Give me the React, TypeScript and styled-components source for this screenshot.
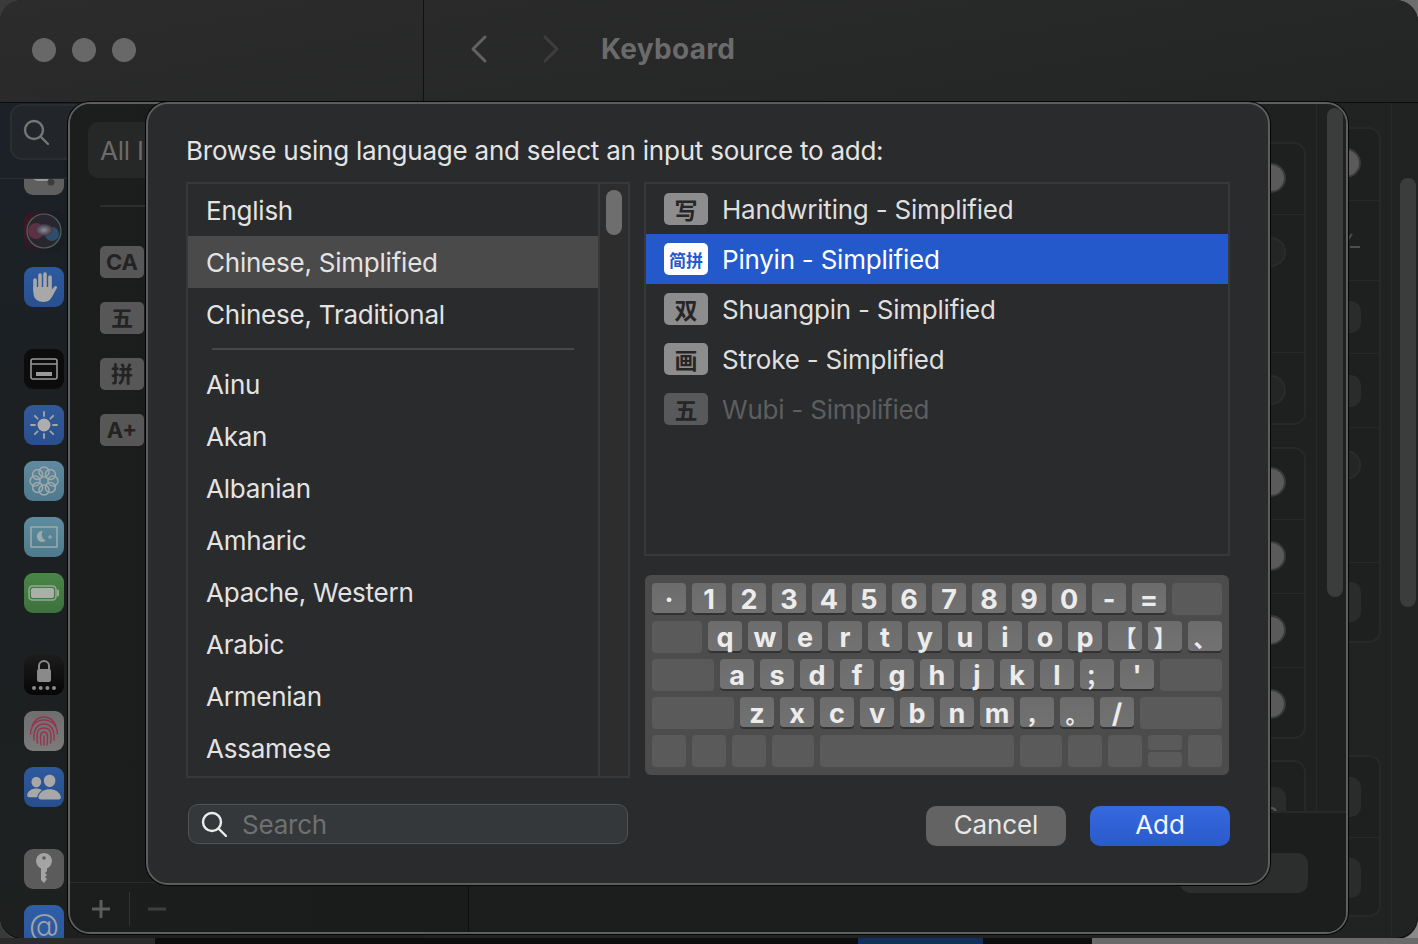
import React from "react";
import styled, { createGlobalStyle } from "styled-components";
import { IoPeople } from "react-icons/io5";

const FONT = `Inter, "Noto Sans CJK SC", "Liberation Sans", sans-serif`;
const TRACK = "-0.23px";

const Global = createGlobalStyle`
  * { box-sizing: border-box; }
  html, body { margin: 0; padding: 0; background: #3a3a3a; overflow: hidden; }
  body { font-family: ${FONT}; -webkit-font-smoothing: antialiased; }
`;

const Desktop = styled.div`
  position: relative;
  width: 1418px;
  height: 944px;
  overflow: hidden;
  background: linear-gradient(100deg, #3a3a3a 0%, #3a3a3a 70%, #8a8a8a 100%);
`;

const MainWindow = styled.div`
  height: 938px;
  border-radius: 22px;
  overflow: hidden;
  display: flex;
  flex-direction: column;
  background: #212222;
  box-shadow: 0 1px 0 #000, 0 2px 0 #4a4a4a;
`;

const BottomStrip = styled.div`
  height: 6px;
  display: flex;
  background: #0f0f0f;
`;

const StripPart = styled.div<{ $w: number; $c: string }>`
  width: ${(p) => p.$w}px;
  background: ${(p) => p.$c};
  flex: ${(p) => (p.$w ? "none" : 1)};
`;

const TitleBar = styled.header`
  height: 103px;
  flex: none;
  display: flex;
  border-bottom: 1px solid #0b0b0b;
  background: linear-gradient(170deg, #2c2c2c, #232424);
`;

const TitleLeft = styled.div`
  width: 424px;
  flex: none;
  display: flex;
  align-items: center;
  gap: 16px;
  padding: 0 0 2px 32px;
  border-right: 1px solid #111;
`;

const TrafficDot = styled.span`
  width: 24px;
  height: 24px;
  border-radius: 50%;
  background: #686868;
`;

const TitleRight = styled.div`
  flex: 1;
  display: flex;
  align-items: center;
  padding: 0 0 4px 43px;
`;

const NavIcon = styled.svg`
  width: 24px;
  height: 32px;
  margin-right: 48px;
  fill: none;
  stroke-width: 3;
  stroke-linecap: round;
  stroke-linejoin: round;
`;

const WindowTitle = styled.h1`
  margin: 0 0 0 -10px;
  font-size: 28px;
  line-height: 34px;
  font-weight: 700;
  letter-spacing: 0.3px;
  color: #6b6b6b;
`;

const MainBody = styled.div`
  flex: 1;
  min-height: 0;
  display: flex;
`;

const Sidebar = styled.aside`
  width: 424px;
  flex: none;
  display: flex;
  flex-direction: column;
  background: linear-gradient(180deg, #1b2127 0%, #1c2023 35%, #1e2020 100%);
`;

const SidebarSearch = styled.div`
  margin: 1px 0 0 10px;
  height: 56px;
  border: 2px solid #2b2e31;
  border-radius: 12px;
  display: flex;
  align-items: center;
  padding-left: 11px;
  background: #22262a;
  flex: none;
`;

const SidebarScroll = styled.div`
  margin-top: 18px;
  flex: 1;
  min-height: 0;
  overflow: hidden;
  border-top: 1px solid #2b2d2e;
  padding: 0 0 0 24px;
`;

const IconStack = styled.div`
  margin-top: -24px;
  display: flex;
  flex-direction: column;
  gap: 42px;
`;

const IconGroup = styled.div`
  display: flex;
  flex-direction: column;
  gap: 16px;
`;

const AppIcon = styled.div<{ $bg: string }>`
  position: relative;
  width: 40px;
  height: 40px;
  border-radius: 9px;
  background: ${(p) => p.$bg};
  display: flex;
  align-items: center;
  justify-content: center;
  overflow: hidden;
  color: #a9a9a9;
`;

const AtGlyph = styled.span`
  font-size: 31px;
  line-height: 36px;
  color: #a0a4aa;
  font-weight: 300;
`;

const MainContent = styled.div`
  flex: 1;
  position: relative;
  display: flex;
  min-width: 0;
`;

const ScrollColumn = styled.div<{ $pad: number }>`
  flex: 1;
  min-width: 0;
  padding-right: ${(p) => p.$pad}px;
  border-right: 1px solid #272828;
  display: flex;
  flex-direction: column;
  align-items: flex-end;
  overflow: hidden;
`;

const Gutter = styled.div<{ $w: number }>`
  width: ${(p) => p.$w}px;
  flex: none;
`;

const ScrollBar = styled.div<{ $top: number; $h: number; $right: number }>`
  position: absolute;
  top: ${(p) => p.$top}px;
  right: ${(p) => p.$right}px;
  width: 16px;
  height: ${(p) => p.$h}px;
  border-radius: 8px;
  background: #3b3d3c;
`;

const Card = styled.section<{ $top: number; $h: number; $w: number }>`
  flex: none;
  width: ${(p) => p.$w}px;
  height: ${(p) => p.$h}px;
  margin-top: ${(p) => p.$top}px;
  border: 2px solid #272828;
  border-radius: 12px;
  display: flex;
  flex-direction: column;
  background: #1e1f1f;
`;

const CardRow = styled.div<{ $h: number; $pad?: number }>`
  flex: none;
  height: ${(p) => p.$h}px;
  display: flex;
  justify-content: flex-end;
  align-items: ${(p) => (p.$pad !== undefined ? "flex-start" : "center")};
  padding: ${(p) => p.$pad ?? 0}px 18px 0 0;
  & + & {
    border-top: 1px solid #272828;
  }
`;

const Knob = styled.span<{ $on?: boolean }>`
  width: 30px;
  height: 30px;
  border-radius: 50%;
  background: ${(p) => (p.$on ? "#5a5a5a" : "#242625")};
  border: 2px solid ${(p) => (p.$on ? "#3a3a3a" : "#2a2c2b")};
`;

const GhostButton = styled.span<{ $w: number; $h: number }>`
  width: ${(p) => p.$w}px;
  height: ${(p) => p.$h}px;
  border-radius: 10px;
  background: #2a2b2b;
  display: flex;
  align-items: center;
  justify-content: flex-end;
  padding-right: 8px;
  color: #555;
  font-size: 26px;
`;

const Sheet = styled.div`
  position: absolute;
  left: 68px;
  top: 102px;
  width: 1280px;
  height: 832px;
  border: 2px solid #5e5f5f;
  border-radius: 22px;
  box-shadow: 0 0 0 1px #050505;
  overflow: hidden;
  display: flex;
  background: #1c1d1d;
`;

const SheetLeft = styled.div`
  width: 399px;
  flex: none;
  display: flex;
  flex-direction: column;
  border-right: 1px solid #0e0e0e;
  background: linear-gradient(90deg, #1c1d1d, #1a1b1b);
`;

const SheetLeftBody = styled.div`
  flex: 1;
  padding: 18px 0 0 18px;
`;

const AllField = styled.div`
  height: 56px;
  border-radius: 10px;
  background: #262727;
  color: #6b6b6b;
  font-size: 26px;
  letter-spacing: ${TRACK};
  line-height: 58px;
  padding-left: 12px;
  white-space: nowrap;
  overflow: hidden;
`;

const PaneRule = styled.hr`
  margin: 27px 0 39px 12px;
  border: 0;
  border-top: 2px solid #2d2e2e;
`;

const SourceList = styled.div`
  display: flex;
  flex-direction: column;
  gap: 24px;
  padding-left: 12px;
`;

const SourceBadge = styled.span`
  width: 44px;
  height: 32px;
  border-radius: 5px;
  background: #575757;
  color: #232323;
  font-size: 22px;
  font-weight: 700;
  line-height: 32px;
  text-align: center;
`;

const PaneFooter = styled.div`
  height: 50px;
  flex: none;
  border-top: 1px solid #2a2b2b;
  display: flex;
  align-items: center;
  padding: 2px 0 0 20px;
`;

const FooterGlyph = styled.svg`
  width: 22px;
  height: 22px;
  stroke-width: 3;
  fill: none;
`;

const FooterSep = styled.span`
  width: 1px;
  height: 34px;
  background: #333;
  margin: 0 16px 0 17px;
`;

const SheetRight = styled.div`
  flex: 1;
  min-width: 0;
  display: flex;
  flex-direction: column;
  position: relative;
  background: #1f2020;
`;

const SheetRightBody = styled.div`
  height: 709px;
  flex: none;
  display: flex;
  border-bottom: 2px solid #272828;
`;

const SheetRightFooter = styled.div`
  flex: 1;
  display: flex;
  justify-content: flex-end;
  padding: 40px 38px 0 0;
  background: #1c1d1d;
`;

const DoneButton = styled.div`
  width: 128px;
  height: 40px;
  border-radius: 10px;
  background: #2c2d2d;
`;

const Dialog = styled.div`
  position: absolute;
  left: 146px;
  top: 102px;
  width: 1124px;
  height: 783px;
  border: 2px solid #5c5d5d;
  border-radius: 22px;
  box-shadow: 0 0 0 1px #040404;
  background: #2a2b2d;
  padding: 30px 38px 0;
  display: flex;
  flex-direction: column;
  color: #e3e3e3;
`;

const DialogTitle = styled.h2`
  margin: 0 0 14px 0;
  height: 34px;
  font-size: 26px;
  letter-spacing: ${TRACK};
  line-height: 34px;
  font-weight: 400;
  color: #e4e4e4;
  white-space: nowrap;
`;

const Columns = styled.div`
  display: flex;
  gap: 14px;
  height: 596px;
  flex: none;
`;

const LanguageBox = styled.div`
  width: 444px;
  flex: none;
  border: 2px solid #37383a;
  display: flex;
`;

const LanguageList = styled.ul`
  flex: 1;
  margin: 0;
  padding: 0;
  list-style: none;
  overflow: hidden;
`;

const LanguageRow = styled.li<{ $selected?: boolean; $pinned?: boolean }>`
  height: 52px;
  line-height: ${(p) => (p.$pinned ? 54 : 52)}px;
  padding-left: 18px;
  font-size: 26px;
  letter-spacing: ${TRACK};
  color: #e3e3e3;
  background: ${(p) => (p.$selected ? "#4a4a4a" : "transparent")};
`;

const LanguageRule = styled.li`
  height: 19px;
  padding: 8px 24px 0;
  &::after {
    content: "";
    display: block;
    height: 2px;
    background: #47484a;
  }
`;

const ScrollTrack = styled.div`
  width: 30px;
  flex: none;
  border-left: 2px solid #37383a;
  background: #2d2d2e;
  padding: 6px 5px 0 6px;
`;

const ScrollThumb = styled.div`
  width: 16px;
  height: 45px;
  border-radius: 8px;
  background: #6e6e6e;
`;

const RightColumn = styled.div`
  flex: 1;
  min-width: 0;
  display: flex;
  flex-direction: column;
`;

const SourceBox = styled.ul`
  height: 374px;
  flex: none;
  margin: 0;
  padding: 0;
  list-style: none;
  border: 2px solid #37383a;
`;

const SourceRow = styled.li<{ $selected?: boolean; $disabled?: boolean }>`
  height: 50px;
  display: flex;
  align-items: center;
  gap: 14px;
  padding-left: 18px;
  font-size: 26px;
  letter-spacing: ${TRACK};
  color: ${(p) => (p.$selected ? "#ffffff" : p.$disabled ? "#5d5e5f" : "#dfdfdf")};
  background: ${(p) => (p.$selected ? "#2359cb" : "transparent")};
`;

const GlyphBadge = styled.span<{ $selected?: boolean; $disabled?: boolean }>`
  width: 44px;
  height: 32px;
  flex: none;
  border-radius: 5px;
  display: flex;
  align-items: center;
  justify-content: center;
  background: ${(p) => (p.$selected ? "#ffffff" : p.$disabled ? "#58595a" : "#8d8d8d")};
  color: ${(p) => (p.$selected ? "#2359cb" : "#262626")};
  font-size: ${(p) => (p.$selected ? 17 : 23)}px;
  letter-spacing: 0;
  font-weight: 700;
  font-family: "Noto Sans CJK SC", sans-serif;
  line-height: 1;
  white-space: nowrap;
`;

const Keyboard = styled.div`
  margin: 19px 1px 0;
  height: 200px;
  flex: none;
  background: #4c4c4c;
  border-radius: 6px;
  padding: 8px 7px;
  display: flex;
  flex-direction: column;
  gap: 6px;
`;

const KeyRow = styled.div`
  height: 32px;
  display: flex;
  gap: 6px;
`;

const Key = styled.span<{ $w: number }>`
  width: ${(p) => p.$w}px;
  height: 30px;
  flex: none;
  border-radius: 4px;
  background: linear-gradient(180deg, #6c6c6c, #727272);
  box-shadow: 0 2px 0 #323232;
  color: #ececec;
  font-size: 27px;
  font-weight: 700;
  line-height: 33px;
  text-align: center;
`;

const CjkKeyLabel = styled.span`
  font-family: "Noto Sans CJK SC", sans-serif;
  font-size: 23px;
  line-height: 30px;
`;

const BlankKey = styled.span<{ $w: number }>`
  width: ${(p) => p.$w}px;
  height: 32px;
  flex: none;
  border-radius: 4px;
  background: #5a5a5a;
`;

const ArrowKey = styled.span`
  width: 34px;
  height: 32px;
  flex: none;
  display: flex;
  flex-direction: column;
  gap: 2px;
`;

const ArrowHalf = styled.span`
  flex: 1;
  background: #5a5a5a;
  border-radius: 3px;
`;

const Footer = styled.div`
  margin-top: 26px;
  display: flex;
  align-items: flex-start;
`;

const SearchField = styled.div`
  width: 440px;
  height: 40px;
  margin-left: 2px;
  border: 1px solid #515355;
  border-radius: 10px;
  background: #34383a;
  display: flex;
  align-items: center;
  gap: 15px;
  padding-left: 12px;
  color: #6e7071;
  font-size: 26px;
  letter-spacing: ${TRACK};
`;

const ActionButton = styled.button<{ $primary?: boolean }>`
  width: 140px;
  height: 40px;
  margin: 2px 0 0 ${(p) => (p.$primary ? 24 : 0)}px;
  border: 0;
  border-radius: 10px;
  font-family: inherit;
  font-size: 26px;
  letter-spacing: -0.1px;
  color: ${(p) => (p.$primary ? "#f4f6fd" : "#e8e8e8")};
  background: ${(p) =>
    p.$primary ? "linear-gradient(180deg, #3569df, #2b5acb)" : "#636363"};
  padding: 0 0 4px;
`;

const Spacer = styled.div`
  flex: 1;
`;

const MagnifierSvg = styled.svg<{ $c: string }>`
  width: 26px;
  height: 26px;
  flex: none;
  fill: none;
  stroke: ${(p) => p.$c};
  stroke-width: 2.4;
  stroke-linecap: round;
`;

const Magnifier = ({ c }: { c: string }) => (
  <MagnifierSvg $c={c} viewBox="0 0 26 26">
    <circle cx="11" cy="11" r="9" />
    <path d="M18 18l7 7" />
  </MagnifierSvg>
);

const LANGS_TOP = ["English", "Chinese, Simplified", "Chinese, Traditional"];
const LANGS_REST = ["Ainu", "Akan", "Albanian", "Amharic", "Apache, Western", "Arabic", "Armenian", "Assamese"];

const SOURCES = [
  { g: "写", t: "Handwriting - Simplified" },
  { g: "简拼", t: "Pinyin - Simplified", selected: true },
  { g: "双", t: "Shuangpin - Simplified" },
  { g: "画", t: "Stroke - Simplified" },
  { g: "五", t: "Wubi - Simplified", disabled: true },
];

type K = { l?: string; w: number; cjk?: boolean; arrow?: boolean };
const letters = (s: string): K[] => s.split("").map((l) => ({ l, w: 34 }));
const cjk = (l: string): K => ({ l, w: 34, cjk: true });

const KEYS: K[][] = [
  [...letters("·1234567890-="), { w: 50 }],
  [{ w: 50 }, ...letters("qwertyuiop"), cjk("【"), cjk("】"), cjk("、")],
  [{ w: 62 }, ...letters("asdfghjkl"), cjk("；"), { l: "'", w: 34 }, { w: 62 }],
  [{ w: 82 }, ...letters("zxcvbnm"), cjk("，"), cjk("。"), { l: "/", w: 34 }, { w: 82 }],
  [{ w: 34 }, { w: 34 }, { w: 34 }, { w: 42 }, { w: 194 }, { w: 42 }, { w: 34 }, { w: 34 }, { w: 34, arrow: true }, { w: 34 }],
];

const SIDEBAR_GROUPS = [
  [
    <AppIcon key="a" $bg="#5f5f5f">
      <svg width="40" height="40" viewBox="0 0 40 40">
        <rect x="8" y="14" width="24" height="12" rx="6" fill="#9a9a9a" />
        <circle cx="27" cy="27" r="3.5" fill="#3c3c3c" />
      </svg>
    </AppIcon>,
    <AppIcon key="b" $bg="#1f1a20">
      <svg width="40" height="40" viewBox="0 0 40 40">
        <defs>
          <radialGradient id="siriTile" cx="20%" cy="45%" r="70%">
            <stop offset="0" stopColor="#4a1428" />
            <stop offset="1" stopColor="#1b1d24" />
          </radialGradient>
          <radialGradient id="siriCore" cx="50%" cy="50%" r="50%">
            <stop offset="0" stopColor="#8e8e98" />
            <stop offset="1" stopColor="#3d3340" />
          </radialGradient>
        </defs>
        <rect width="40" height="40" fill="url(#siriTile)" />
        <circle cx="20" cy="20" r="17" fill="#2a2630" />
        <circle cx="12" cy="20" r="8" fill="#5e3044" />
        <circle cx="28" cy="23" r="7" fill="#2f4d6d" />
        <ellipse cx="20" cy="19" rx="9" ry="6" fill="url(#siriCore)" />
        <circle cx="20" cy="20" r="17" fill="none" stroke="#4a6a5a" strokeWidth="1.2" />
      </svg>
    </AppIcon>,
    <AppIcon key="c" $bg="linear-gradient(180deg,#2d5a9f,#29508f)">
      <svg width="30" height="32" viewBox="0 0 30 32" fill="#a8a8a8" stroke="#a8a8a8" strokeLinecap="round">
        <path d="M6 9v11M11 4v14M16 3v15M21 6v12" strokeWidth="3.6" fill="none" />
        <path d="M4.5 16h18v3l3-3.5c1.3-1.3 3.3 0 2.4 1.6l-4.4 8C21.600 29 19 31 15 31c-6 0-10.500-3-10.500-9z" stroke="none" />
      </svg>
    </AppIcon>,
  ],
  [
    <AppIcon key="a" $bg="#0c0c0c">
      <svg width="28" height="22" viewBox="0 0 28 22" fill="none" stroke="#999" strokeWidth="1.6">
        <rect x="1" y="1" width="26" height="20" rx="2" />
        <path d="M1 6h26" />
        <rect x="6" y="14" width="16" height="4" fill="#999" stroke="none" />
      </svg>
    </AppIcon>,
    <AppIcon key="b" $bg="linear-gradient(180deg,#31599a,#2a4f8c)">
      <svg width="30" height="30" viewBox="0 0 30 30" stroke="#a6a6a6" strokeWidth="1.8" strokeLinecap="round">
        <circle cx="15" cy="15" r="6.500" fill="#aeaeae" stroke="none" />
        <path d="M15 2v4M15 24v4M2 15h4M24 15h4M5.800 5.800l2.800 2.800M21.400 21.400l2.800 2.800M5.800 24.200l2.800-2.800M21.400 8.600l2.800-2.800" />
      </svg>
    </AppIcon>,
    <AppIcon key="c" $bg="linear-gradient(180deg,#5f8a9f,#4f7a8d)">
      <svg width="32" height="32" viewBox="0 0 32 32" fill="none" stroke="#a2a9ac" strokeWidth="1.5">
        <circle cx="16" cy="7" r="5" />
        <circle cx="16" cy="25" r="5" />
        <circle cx="7" cy="16" r="5" />
        <circle cx="25" cy="16" r="5" />
        <circle cx="9.600" cy="9.600" r="5" />
        <circle cx="22.400" cy="9.600" r="5" />
        <circle cx="9.600" cy="22.400" r="5" />
        <circle cx="22.400" cy="22.400" r="5" />
      </svg>
    </AppIcon>,
    <AppIcon key="d" $bg="linear-gradient(180deg,#5f8b9e,#4d7b8c)">
      <svg width="28" height="22" viewBox="0 0 28 22" fill="none">
        <rect x="1" y="1" width="26" height="20" stroke="#9eaaae" strokeWidth="1.5" />
        <path d="M13 5a5.500 5.500 0 1 0 3 9.500A6 6 0 0 1 13 5z" fill="#9eaaae" />
        <path d="M20 9v4M18 11h4" stroke="#9eaaae" strokeWidth="1.2" />
      </svg>
    </AppIcon>,
    <AppIcon key="e" $bg="linear-gradient(180deg,#4a8447,#3d713d)">
      <svg width="32" height="16" viewBox="0 0 32 16" fill="none">
        <rect x="1" y="1" width="27" height="14" rx="3.500" stroke="#97a897" strokeWidth="1.500" />
        <rect x="3" y="3" width="23" height="10" rx="2" fill="#a9afa9" />
        <path d="M30 5.500v5" stroke="#97a897" strokeWidth="2" strokeLinecap="round" />
      </svg>
    </AppIcon>,
  ],
  [
    <AppIcon key="a" $bg="linear-gradient(180deg,#1c1c1c,#060606)">
      <svg width="26" height="32" viewBox="0 0 26 32" fill="#8a8a8a">
        <path d="M8 11V7a5 5 0 0 1 10 0v4" fill="none" stroke="#8a8a8a" strokeWidth="2" />
        <rect x="6" y="10" width="14" height="13" rx="2" />
        <circle cx="3" cy="29" r="2" />
        <circle cx="9.700" cy="29" r="2" />
        <circle cx="16.400" cy="29" r="2" />
        <circle cx="23" cy="29" r="2" />
      </svg>
    </AppIcon>,
    <AppIcon key="b" $bg="linear-gradient(180deg,#6f6f6f,#7b7b7b)">
      <svg width="30" height="32" viewBox="0 0 30 32" fill="none" stroke="#96344f" strokeWidth="1.4" strokeLinecap="round">
        <path d="M3 11C6 4 11 2 15 2s9 2 12 9" />
        <path d="M1.500 19c.5-9 6-14 13.500-14s13 5 13.500 14" />
        <path d="M5 25c-1-10 3-16 10-16s11 6 10 16" />
        <path d="M8.500 28c-1.500-10 0-15 6.500-15s8 5 6.500 15" />
        <path d="M12 30c-1-9-1-13 3-13s4 4 3 13" />
        <path d="M15 21v9" />
      </svg>
    </AppIcon>,
    <AppIcon key="c" $bg="linear-gradient(180deg,#2d5a9e,#284e8c)">
      <IoPeople size={36} color="#a8a8a8" />
    </AppIcon>,
  ],
  [
    <AppIcon key="a" $bg="#5b5b5b">
      <svg width="20" height="32" viewBox="0 0 20 32" fill="#a4a4a4">
        <path d="M10 0a8 8 0 0 1 3 15.400V18l-2 2 2 2-2 2 2 2-3 4-3-3V15.400A8 8 0 0 1 10 0z" />
        <circle cx="10" cy="5" r="1.800" fill="#5b5b5b" />
      </svg>
    </AppIcon>,
    <AppIcon key="b" $bg="linear-gradient(180deg,#2f5fa8,#2c5597)">
      <AtGlyph>@</AtGlyph>
    </AppIcon>,
  ],
];

type RowSpec = { h: number; c?: "on" | "off" | "btn" | "btnLg" | "mark" | "cue"; pad?: number };

const Control = ({ c }: { c?: RowSpec["c"] }) => {
  if (c === "on") return <Knob $on />;
  if (c === "off") return <Knob />;
  if (c === "btn") return <GhostButton $w={62} $h={32} />;
  if (c === "btnLg") return <GhostButton $w={64} $h={40} />;
  if (c === "cue") return <GhostButton $w={64} $h={50}>c</GhostButton>;
  if (c === "mark")
    return (
      <svg width="14" height="16" viewBox="0 0 14 16" fill="none" stroke="#4c4d4d" strokeWidth="2">
        <path d="M0 8L5 1M3 14h10" />
      </svg>
    );
  return null;
};

const Rows = ({ rows }: { rows: RowSpec[] }) => (
  <>
    {rows.map((r, i) => (
      <CardRow key={i} $h={r.h} $pad={r.pad}>
        <Control c={r.c} />
      </CardRow>
    ))}
  </>
);

export default function App() {
  return (
    <Desktop>
      <Global />
      <MainWindow>
        <TitleBar>
          <TitleLeft>
            <TrafficDot />
            <TrafficDot />
            <TrafficDot />
          </TitleLeft>
          <TitleRight>
            <NavIcon viewBox="0 0 24 32" stroke="#626262">
              <path d="M18 4L6 16l12 12" />
            </NavIcon>
            <NavIcon viewBox="0 0 24 32" stroke="#3d3d3d">
              <path d="M6 4l12 12L6 28" />
            </NavIcon>
            <WindowTitle>Keyboard</WindowTitle>
          </TitleRight>
        </TitleBar>
        <MainBody>
          <Sidebar>
            <SidebarSearch>
              <Magnifier c="#767676" />
            </SidebarSearch>
            <SidebarScroll>
              <IconStack>
                {SIDEBAR_GROUPS.map((g, i) => (
                  <IconGroup key={i}>{g}</IconGroup>
                ))}
              </IconStack>
            </SidebarScroll>
          </Sidebar>
          <MainContent>
            <ScrollColumn $pad={10}>
              <Card $top={24} $h={516} $w={300}>
                <Rows
                  rows={[
                    { h: 71, c: "on", pad: 19 },
                    { h: 80, c: "mark" },
                    { h: 73, c: "btn" },
                    { h: 74, c: "btn" },
                    { h: 135, c: "off", pad: 22 },
                    { h: 79, c: "btnLg" },
                  ]}
                />
              </Card>
              <Card $top={112} $h={162} $w={300}>
                <Rows rows={[{ h: 80, c: "btnLg" }, { h: 80, c: "btnLg" }]} />
              </Card>
            </ScrollColumn>
            <Gutter $w={26} />
            <ScrollBar $top={75} $h={429} $right={2} />
          </MainContent>
        </MainBody>
      </MainWindow>
      <BottomStrip>
        <StripPart $w={155} $c="#2b2b2b" />
        <StripPart $w={703} $c="#0d0d0d" />
        <StripPart $w={125} $c="#12305f" />
        <StripPart $w={109} $c="#0d0d0d" />
        <StripPart $w={0} $c="#6a6a6a" />
      </BottomStrip>

      <Sheet>
        <SheetLeft>
          <SheetLeftBody>
            <AllField>All I</AllField>
            <PaneRule />
            <SourceList>
              <SourceBadge>CA</SourceBadge>
              <SourceBadge>五</SourceBadge>
              <SourceBadge>拼</SourceBadge>
              <SourceBadge>A+</SourceBadge>
            </SourceList>
          </SheetLeftBody>
          <PaneFooter>
            <FooterGlyph viewBox="0 0 22 22" stroke="#5c5c5c">
              <path d="M11 2v18M2 11h18" />
            </FooterGlyph>
            <FooterSep />
            <FooterGlyph viewBox="0 0 22 22" stroke="#3e3e3e">
              <path d="M2 11h18" />
            </FooterGlyph>
          </PaneFooter>
        </SheetLeft>
        <SheetRight>
          <SheetRightBody>
            <ScrollColumn $pad={10}>
              <Card $top={38} $h={283} $w={300}>
                <Rows
                  rows={[
                    { h: 70, c: "on", pad: 19 },
                    { h: 138, c: "off", pad: 22 },
                    { h: 71, c: "off", pad: 22 },
                  ]}
                />
              </Card>
              <Card $top={22} $h={292} $w={300}>
                <Rows
                  rows={[
                    { h: 70, c: "on", pad: 18 },
                    { h: 74, c: "on", pad: 21 },
                    { h: 74, c: "on", pad: 21 },
                    { h: 70, c: "on", pad: 21 },
                  ]}
                />
              </Card>
              <Card $top={21} $h={160} $w={300}>
                <Rows rows={[{ h: 100, c: "cue" }]} />
              </Card>
            </ScrollColumn>
            <Gutter $w={29} />
          </SheetRightBody>
          <SheetRightFooter>
            <DoneButton />
          </SheetRightFooter>
          <ScrollBar $top={4} $h={489} $right={3} />
        </SheetRight>
      </Sheet>

      <Dialog>
        <DialogTitle>Browse using language and select an input source to add:</DialogTitle>
        <Columns>
          <LanguageBox>
            <LanguageList>
              {LANGS_TOP.map((l, i) => (
                <LanguageRow key={l} $pinned $selected={i === 1}>
                  {l}
                </LanguageRow>
              ))}
              <LanguageRule />
              {LANGS_REST.map((l) => (
                <LanguageRow key={l}>{l}</LanguageRow>
              ))}
            </LanguageList>
            <ScrollTrack>
              <ScrollThumb />
            </ScrollTrack>
          </LanguageBox>
          <RightColumn>
            <SourceBox>
              {SOURCES.map((s) => (
                <SourceRow key={s.t} $selected={s.selected} $disabled={s.disabled}>
                  <GlyphBadge $selected={s.selected} $disabled={s.disabled}>
                    {s.g}
                  </GlyphBadge>
                  {s.t}
                </SourceRow>
              ))}
            </SourceBox>
            <Keyboard>
              {KEYS.map((row, i) => (
                <KeyRow key={i}>
                  {row.map((k, j) =>
                    k.arrow ? (
                      <ArrowKey key={j}>
                        <ArrowHalf />
                        <ArrowHalf />
                      </ArrowKey>
                    ) : k.l ? (
                      <Key key={j} $w={k.w}>
                        {k.cjk ? <CjkKeyLabel>{k.l}</CjkKeyLabel> : k.l}
                      </Key>
                    ) : (
                      <BlankKey key={j} $w={k.w} />
                    )
                  )}
                </KeyRow>
              ))}
            </Keyboard>
          </RightColumn>
        </Columns>
        <Footer>
          <SearchField>
            <Magnifier c="#ececec" />
            Search
          </SearchField>
          <Spacer />
          <ActionButton>Cancel</ActionButton>
          <ActionButton $primary>Add</ActionButton>
        </Footer>
      </Dialog>
    </Desktop>
  );
}
